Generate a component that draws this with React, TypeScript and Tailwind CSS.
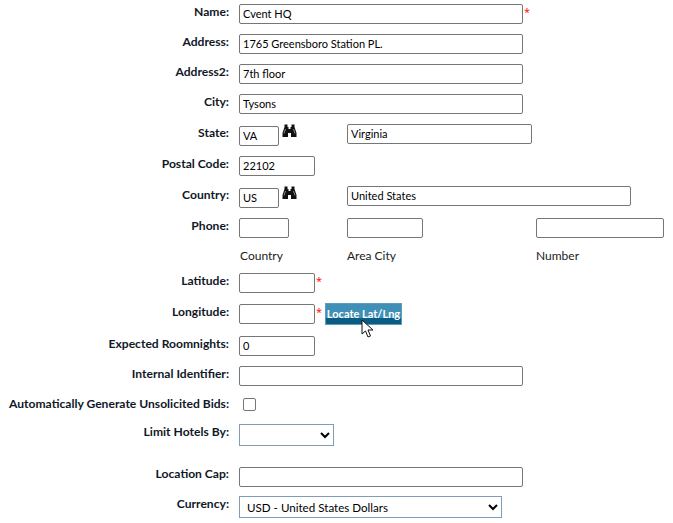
const inputCls = "block h-5 border border-[#767676] rounded-[2px] bg-white pl-[3px] pb-px text-[11px] text-black outline-none";
const font = { fontFamily: '"Lato", "Open Sans", sans-serif' };

function Row({ label, className = "", labelClass = "", children }: { label?: string; className?: string; labelClass?: string; children?: React.ReactNode }) {
  return (
    <div className={`flex items-start ${className}`}>
      <div className={`w-[229px] shrink-0 whitespace-nowrap text-right text-[12.1px] font-bold leading-4 text-[#101828] ${labelClass}`}>{label}</div>
      <div className="ml-[10px] flex items-start">{children}</div>
    </div>
  );
}

function Req() {
  return <span className="w-[10px] pl-px text-[11px] leading-4 text-[#ff0000] [font-family:'Open_Sans']">*</span>;
}

function Field({ w, value = "", className = "" }: { w: string; value?: string; className?: string }) {
  return <input readOnly value={value} className={`${inputCls} ${w} ${className}`} />;
}

function Bino() {
  return (
    <svg className="ml-[3px] -mt-[2px] shrink-0" width="15" height="14" viewBox="0 0 15 14">
      <path
        d="M2.5 0.5 H5.5 V3 H6.5 V5 H8.5 V3 H9.5 V0.5 H12.5 V3 L14.5 9 V13 H9 V9 H6 V13 H0.5 V9 L2.5 3 Z"
        fill="#111"
      />
      <path d="M2 9.5 L3.5 5 M11.5 5 L13 9.5" stroke="#8a8a8a" strokeWidth="1" />
    </svg>
  );
}

export default function App() {
  return (
    <div className="relative h-[523px] w-[673px] overflow-hidden bg-white pt-1" style={font}>
      <Row label="Name:"><Field w="w-[284px]" value="Cvent HQ" /><Req /></Row>
      <Row label="Address:" className="mt-[10px]"><Field w="w-[284px]" value="1765 Greensboro Station PL." /></Row>
      <Row label="Address2:" className="mt-[10px]"><Field w="w-[284px]" value="7th floor" /></Row>
      <Row label="City:" className="mt-[10px]"><Field w="w-[284px]" value="Tysons" /></Row>
      <Row label="State:" className="mt-[12px]" labelClass="-mt-[1px]">
        <Field w="w-[40px]" value="VA" />
        <Bino />
        <Field w="w-[185px]" value="Virginia" className="ml-[50px] -mt-[2px]" />
      </Row>
      <Row label="Postal Code:" className="mt-[10px]"><Field w="w-[76px]" value="22102" /></Row>
      <Row label="Country:" className="mt-[12px]" labelClass="-mt-[1px]">
        <Field w="w-[40px]" value="US" />
        <Bino />
        <Field w="w-[284px]" value="United States" className="ml-[50px] -mt-[2px]" />
      </Row>
      <Row label="Phone:" className="mt-[10px]">
        <Field w="w-[50px]" />
        <Field w="w-[76px]" className="ml-[58px]" />
        <Field w="w-[128px]" className="ml-[113px]" />
      </Row>
      <Row className="mt-[10px]">
        <span className="w-[108px] pl-px text-[12px] leading-4 text-[#222]">Country</span>
        <span className="w-[189px] text-[12px] leading-4 text-[#222]">Area City</span>
        <span className="text-[12px] leading-4 text-[#222]">Number</span>
      </Row>
      <Row label="Latitude:" className="mt-[9px]"><Field w="w-[76px]" /><Req /></Row>
      <Row label="Longitude:" className="mt-[11px]">
        <Field w="w-[76px]" /><Req />
        <button className="-mt-px h-[22px] w-[77px] whitespace-nowrap border border-[#5b9dbd] bg-[linear-gradient(#3f8fb6_0,#3f8fb6_70%,#0b5c85_70%,#0b5c85_100%)] text-[11px] font-bold leading-4 text-white">Locate Lat/Lng</button>
      </Row>
      <Row label="Expected Roomnights:" className="mt-[11px]"><Field w="w-[76px]" value="0" /></Row>
      <Row label="Internal Identifier:" className="mt-[10px]"><Field w="w-[284px]" /></Row>
      <Row label="Automatically Generate Unsolicited Bids:" className="mt-[10px]">
        <input type="checkbox" className="ml-[4px] mt-[2px] h-[13px] w-[13px] appearance-none rounded-[2px] border border-[#767676] bg-white" />
      </Row>
      <Row label="Limit Hotels By:" className="mt-[12px]">
        <select className="h-[22px] w-[95px] border border-[#7f9db9] bg-white text-[12px] text-black" style={font}><option></option></select>
      </Row>
      <Row label="Location Cap:" className="mt-[21px]" labelClass="-mt-[1px]"><Field w="w-[284px]" /></Row>
      <Row label="Currency:" className="mt-[9px]">
        <select className="h-[22px] w-[263px] border border-[#7f9db9] bg-white pl-[3px] text-[11.6px] text-black" style={font}><option>USD - United States Dollars</option></select>
      </Row>
      <svg className="absolute left-[361px] top-[319px]" width="14" height="20" viewBox="0 0 14 20">
        <path d="M1 1 L1 15 L4.5 12 L7 18 L9.5 17 L7 11 L12 11 Z" fill="#fff" stroke="#111" strokeWidth="1" strokeLinejoin="miter" />
      </svg>
    </div>
  );
}
